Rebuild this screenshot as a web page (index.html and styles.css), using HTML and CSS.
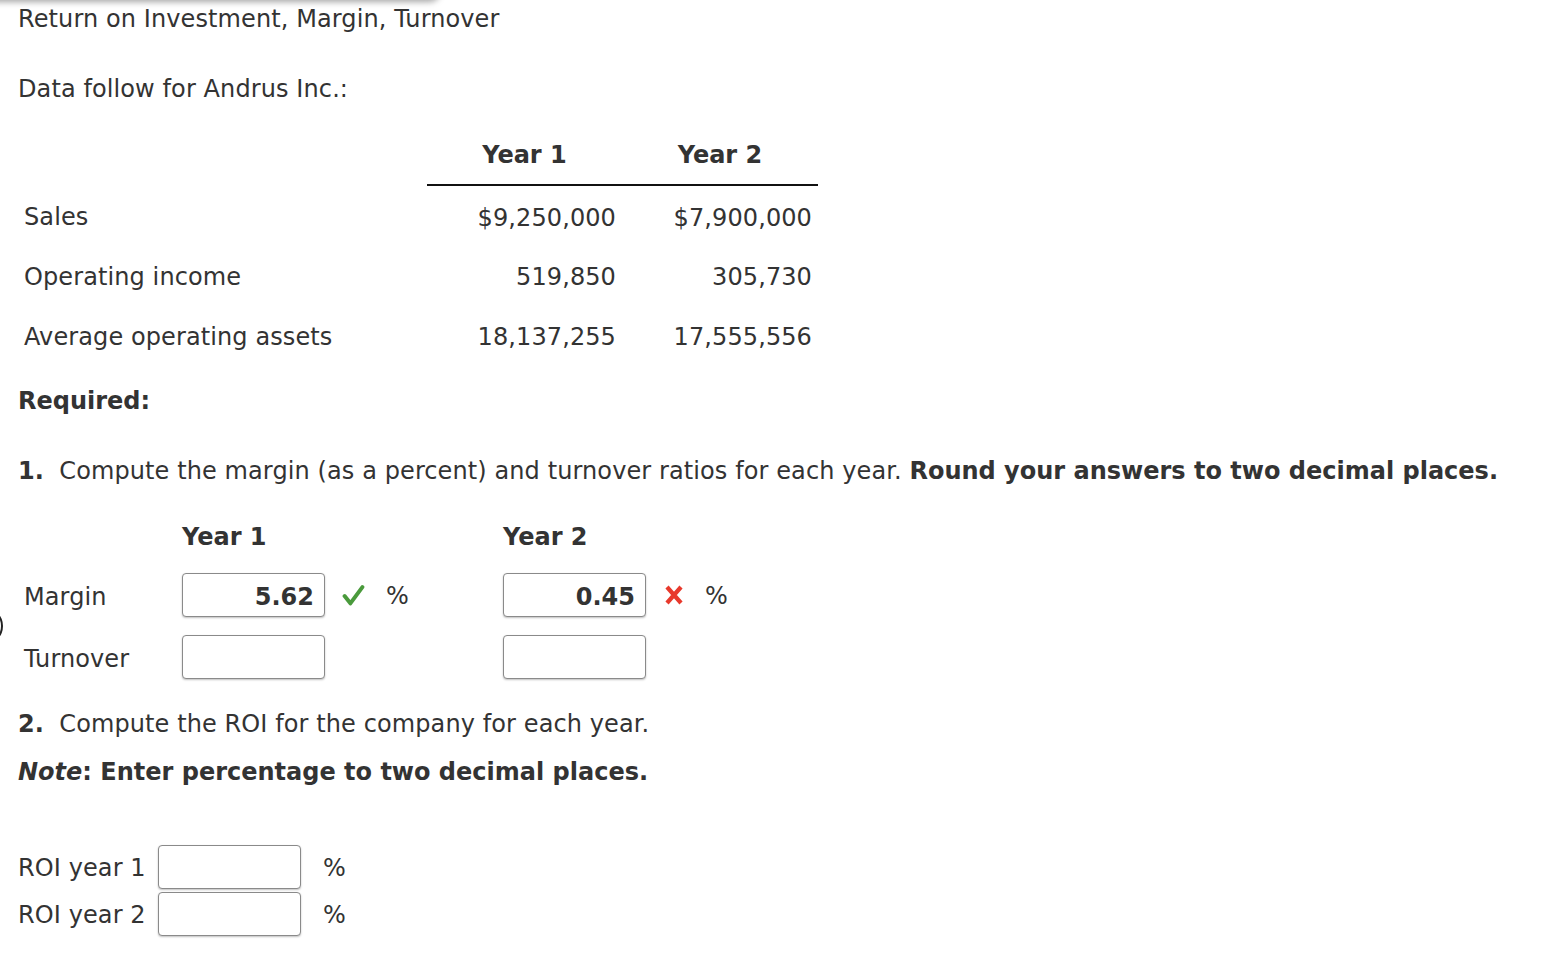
FILE: index.html
```html
<!DOCTYPE html>
<html>
<head>
<meta charset="utf-8">
<link rel="stylesheet" href="styles.css">
</head>
<body>
<div class="topshade"></div>
<div class="edge-arc"></div>
<main class="page">
  <h1 class="title">Return on Investment, Margin, Turnover</h1>
  <p class="intro">Data follow for Andrus Inc.:</p>

  <table class="data">
    <thead>
      <tr><th class="lbl"></th><th class="yr y1">Year 1</th><th class="yr y2">Year 2</th></tr>
    </thead>
    <tbody>
      <tr><td class="lbl">Sales</td><td class="num">$9,250,000</td><td class="num">$7,900,000</td></tr>
      <tr><td class="lbl">Operating income</td><td class="num">519,850</td><td class="num">305,730</td></tr>
      <tr><td class="lbl">Average operating assets</td><td class="num">18,137,255</td><td class="num">17,555,556</td></tr>
    </tbody>
  </table>

  <p class="required">Required:</p>

  <p class="q1"><b>1.</b>&nbsp; Compute the margin (as a percent) and turnover ratios for each year. <b>Round your answers to two decimal places.</b></p>

  <div class="answers">
    <div class="a-head"></div>
    <div class="a-year">Year 1</div>
    <div class="a-year">Year 2</div>

    <div class="a-lbl">Margin</div>
    <div class="a-cell">
      <span class="box filled">5.62</span>
      <svg class="mark" width="23" height="23" viewBox="0 0 22 22"><path d="M2.5 11.5 L8 18.5 L19.5 3" fill="none" stroke="#4a9a3c" stroke-width="3.8" stroke-linecap="round" stroke-linejoin="round"/></svg>
      <span class="pct">%</span>
    </div>
    <div class="a-cell">
      <span class="box filled">0.45</span>
      <svg class="xmark" width="20" height="20" viewBox="0 0 20 20"><path d="M3 2 L17 18 M17 2 L3 18" fill="none" stroke="#e8392c" stroke-width="4.2"/></svg>
      <span class="pct">%</span>
    </div>

    <div class="a-lbl">Turnover</div>
    <div class="a-cell"><span class="box"></span></div>
    <div class="a-cell"><span class="box"></span></div>
  </div>

  <p class="q2"><b>2.</b>&nbsp; Compute the ROI for the company for each year.</p>
  <p class="note"><b><i>Note</i>: Enter percentage to two decimal places.</b></p>

  <div class="roi">
    <div class="roi-row"><span class="roi-lbl">ROI year 1</span><span class="box"></span><span class="pct">%</span></div>
    <div class="roi-row"><span class="roi-lbl">ROI year 2</span><span class="box"></span><span class="pct">%</span></div>
  </div>
</main>
</body>
</html>
```

FILE: styles.css
```css
html, body {
  margin: 0;
  padding: 0;
  background: #fff;
}
body {
  font-family: "DejaVu Sans", Verdana, sans-serif;
  font-size: 24px;
  letter-spacing: 0.1px;
  color: #333;
  width: 1560px;
  height: 970px;
  overflow: hidden;
  position: relative;
}
b, .required, .a-year, .data th, .box {
  letter-spacing: 0;
}
.topshade {
  position: absolute;
  left: -20px;
  top: -12px;
  width: 460px;
  height: 12px;
  border-radius: 0 0 10px 10px;
  box-shadow: 0 2px 6px rgba(0,0,0,0.35);
  background: #fff;
}
.edge-arc {
  position: absolute;
  left: -30px;
  top: 608px;
  width: 33px;
  height: 36px;
  border-radius: 50%;
  border: 2px solid #222;
  box-sizing: border-box;
}
.page {
  padding: 4px 0 0 18px;
}
.title {
  font-size: 24px;
  font-weight: normal;
  margin: 0;
  line-height: 30px;
}
p {
  line-height: 30px;
}
.intro {
  margin: 40px 0 0 0;
}
.data {
  border-collapse: collapse;
  margin-top: 36px;
}
.data th, .data td {
  padding: 0;
  line-height: 30px;
}
.data th.lbl { width: 409px; }
.data th.yr {
  font-weight: bold;
  text-align: center;
  vertical-align: top;
  height: 45px;
  box-sizing: border-box;
  border-bottom: 2px solid #111;
}
.data th.y1 { width: 195px; }
.data th.y2 { width: 196px; }
.data td {
  height: 60px;
  vertical-align: middle;
  padding-top: 4px;
  box-sizing: border-box;
}
.data td.lbl {
  padding-left: 6px;
}
.data td.num {
  text-align: right;
  padding-right: 6px;
}
.required {
  margin: 21px 0 0 0;
  font-weight: bold;
}
.q1 {
  margin: 40px 0 0 0;
}
.answers {
  display: grid;
  grid-template-columns: 164px 321px 300px;
  grid-template-rows: 33px 44px 44px;
  row-gap: 18px;
  margin-top: 36px;
  align-items: center;
}
.a-year {
  font-weight: bold;
  align-self: start;
  line-height: 30px;
}
.a-lbl {
  padding-left: 6px;
  padding-top: 4px;
}
.a-cell {
  display: flex;
  align-items: center;
}
.box {
  display: inline-block;
  box-sizing: border-box;
  width: 143px;
  height: 44px;
  border: 1.5px solid #8a8a8a;
  border-radius: 4px;
  box-shadow: 0 1px 2px rgba(0,0,0,0.25);
  background: #fff;
  text-align: right;
  line-height: 46px;
  padding-right: 10px;
  font-weight: bold;
}
.mark {
  margin-left: 17px;
}
.xmark {
  margin-left: 18px;
}
.pct {
  margin-left: 21px;
  padding-top: 2px;
}
.q2 {
  margin: 30px 0 0 0;
}
.note {
  margin: 18px 0 0 0;
}
.roi {
  margin-top: 58px;
  display: flex;
  flex-direction: column;
  gap: 3px;
}
.roi-row {
  display: flex;
  align-items: center;
}
.roi-lbl {
  width: 140px;
  padding-top: 2px;
}
.roi .pct {
  margin-left: 22px;
}
```
